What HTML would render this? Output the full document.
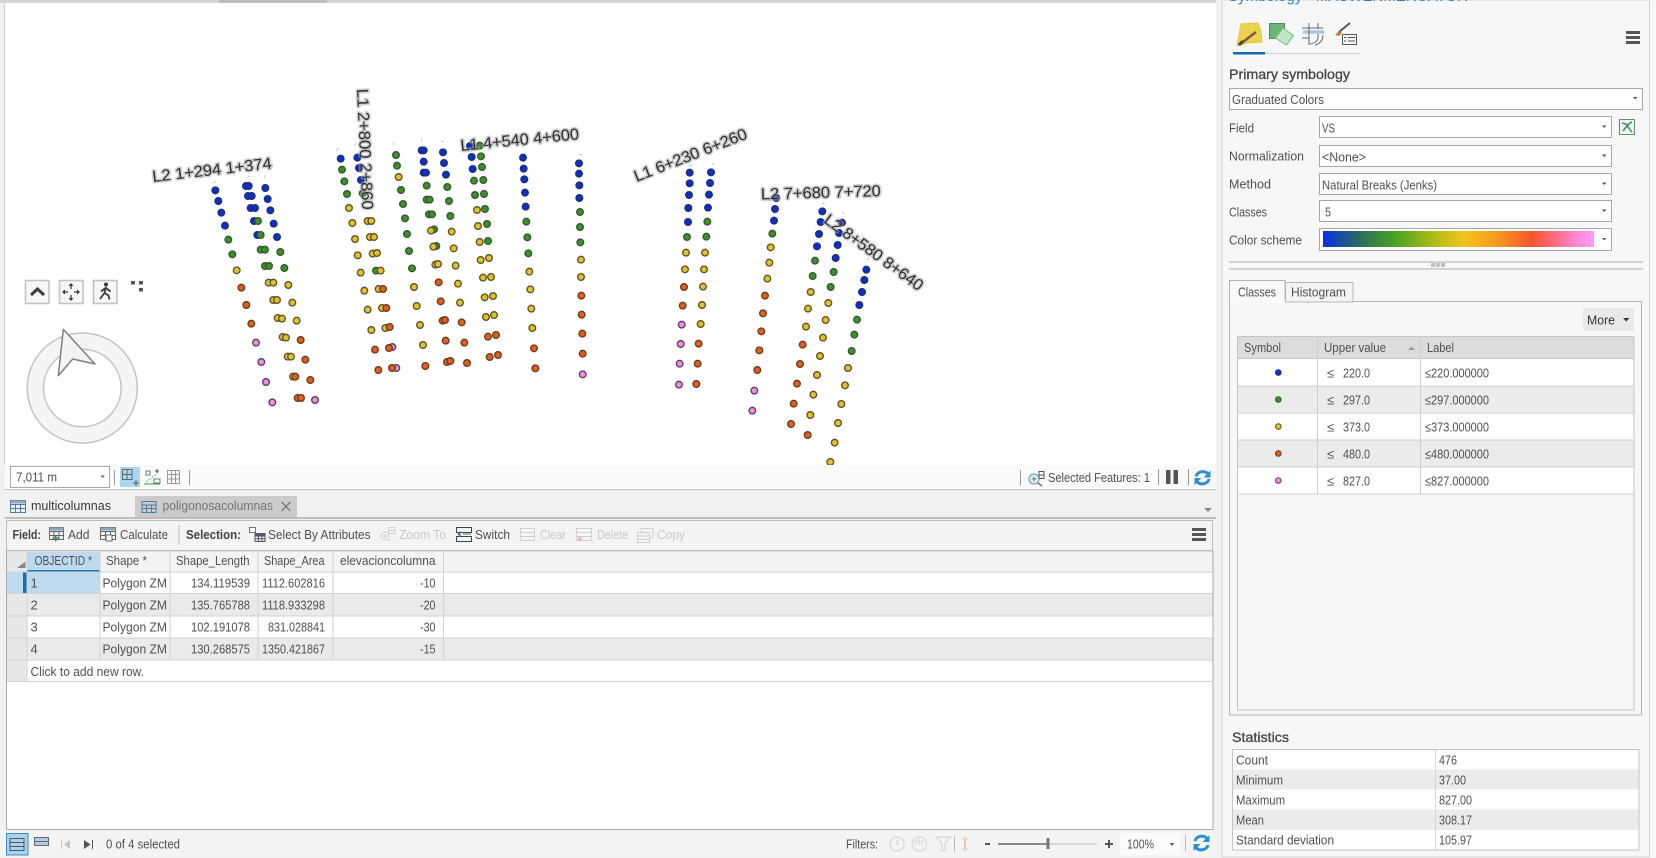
<!DOCTYPE html>
<html><head><meta charset="utf-8"><title>Symbology</title>
<style>
html,body{margin:0;padding:0;background:#f3f3f3;width:1656px;height:858px;overflow:hidden}
svg{display:block;position:absolute;left:0;top:0;filter:blur(.3px)}
text{font-family:"Liberation Sans",sans-serif;font-size:13px;fill:#505050;white-space:pre}
.dim{fill:#c9c9c9}
.h{font-size:14px;fill:#444;stroke:#444;stroke-width:.3px}
.b{font-weight:bold;fill:#444}
.lb{font-size:16px;fill:#2c2c2c;stroke:rgba(165,165,165,.55);stroke-width:3.2px;paint-order:stroke;stroke-linejoin:round}
.dots circle{r:10px;stroke-width:4px}
.cb{fill:#1030c4;stroke:#1c2c80}
.cg{fill:#3f8f2e;stroke:#2f5a2a}
.cy{fill:#e0c22e;stroke:#5e5020}
.co{fill:#e0601e;stroke:#6a3a1c}
.cp{fill:#ea90dc;stroke:#5e3a5c}
.ln{fill:none;stroke:#666;stroke-width:1}
.lnb{fill:none;stroke:#4a7ea8;stroke-width:1}
.lnd{fill:none;stroke:#d0d0d0;stroke-width:1}
</style></head><body>
<svg width="1656" height="858" viewBox="0 0 1656 858" xmlns="http://www.w3.org/2000/svg">
<defs>
<linearGradient id="cs" x1="0" x2="1" y1="0" y2="0">
<stop offset="0" stop-color="#0a2fe6"/><stop offset=".13" stop-color="#2b6a62"/><stop offset=".27" stop-color="#4aa41e"/><stop offset=".4" stop-color="#a9bb18"/><stop offset=".52" stop-color="#f2c41c"/><stop offset=".65" stop-color="#f7961e"/><stop offset=".77" stop-color="#f4552c"/><stop offset=".87" stop-color="#ff6f90"/><stop offset=".95" stop-color="#ff8fe4"/><stop offset="1" stop-color="#ff9cf6"/>
</linearGradient>
</defs>

<!-- page bg -->
<rect x="0" y="0" width="1656" height="858" fill="#f1f1f1"/>
<rect x="1650" y="0" width="6" height="858" fill="#f8f8f8"/>

<!-- Map -->
<rect x="0" y="0" width="1216" height="3" fill="#d4d4d4"/>
<rect x="219" y="0" width="108" height="3" fill="#bdbdbd"/>
<rect x="4" y="3" width="1212" height="462" fill="#ffffff"/>
<rect x="4" y="3" width="1" height="462" fill="#cfcfcf"/>

<g transform="translate(140,80) scale(.33333)" class="dots">
<g class="cb"><circle cx="226" cy="331"/><circle cx="235" cy="363"/><circle cx="244" cy="398"/><circle cx="255" cy="437"/><circle cx="318" cy="318"/><circle cx="326" cy="318"/><circle cx="324" cy="348"/><circle cx="335" cy="348"/><circle cx="332" cy="384"/><circle cx="345" cy="384"/><circle cx="342" cy="423"/><circle cx="352" cy="465"/><circle cx="376" cy="324"/><circle cx="383" cy="357"/><circle cx="391" cy="391"/><circle cx="401" cy="431"/><circle cx="411" cy="471"/><circle cx="602" cy="236"/><circle cx="652" cy="233"/><circle cx="657" cy="264"/><circle cx="663" cy="300"/><circle cx="845" cy="211"/><circle cx="851" cy="211"/><circle cx="851" cy="245"/><circle cx="851" cy="278"/><circle cx="858" cy="278"/><circle cx="909" cy="217"/><circle cx="912" cy="249"/><circle cx="918" cy="284"/><circle cx="990" cy="198"/><circle cx="995" cy="231"/><circle cx="998" cy="267"/><circle cx="1149" cy="233"/><circle cx="1151" cy="266"/><circle cx="1153" cy="298"/><circle cx="1155" cy="338"/><circle cx="1157" cy="380"/><circle cx="1317" cy="250"/><circle cx="1317" cy="281"/><circle cx="1318" cy="316"/><circle cx="1318" cy="354"/></g>
<g class="cg"><circle cx="265" cy="479"/><circle cx="277" cy="523"/><circle cx="354" cy="423"/><circle cx="362" cy="465"/><circle cx="362" cy="509"/><circle cx="375" cy="509"/><circle cx="375" cy="558"/><circle cx="387" cy="558"/><circle cx="421" cy="516"/><circle cx="433" cy="564"/><circle cx="606" cy="269"/><circle cx="613" cy="304"/><circle cx="621" cy="342"/><circle cx="668" cy="340"/><circle cx="708" cy="572"/><circle cx="768" cy="225"/><circle cx="771" cy="257"/><circle cx="783" cy="330"/><circle cx="789" cy="372"/><circle cx="795" cy="415"/><circle cx="801" cy="462"/><circle cx="807" cy="513"/><circle cx="816" cy="565"/><circle cx="860" cy="317"/><circle cx="860" cy="359"/><circle cx="869" cy="359"/><circle cx="867" cy="403"/><circle cx="876" cy="403"/><circle cx="882" cy="448"/><circle cx="889" cy="498"/><circle cx="922" cy="321"/><circle cx="927" cy="363"/><circle cx="931" cy="408"/><circle cx="1002" cy="302"/><circle cx="1005" cy="345"/><circle cx="1019" cy="197"/><circle cx="1023" cy="229"/><circle cx="1026" cy="261"/><circle cx="1030" cy="300"/><circle cx="1032" cy="342"/><circle cx="1035" cy="387"/><circle cx="1041" cy="432"/><circle cx="1044" cy="483"/><circle cx="1159" cy="425"/><circle cx="1162" cy="472"/><circle cx="1165" cy="520"/><circle cx="1320" cy="396"/><circle cx="1320" cy="441"/><circle cx="1321" cy="487"/></g>
<g class="cy"><circle cx="290" cy="571"/><circle cx="386" cy="608"/><circle cx="400" cy="608"/><circle cx="400" cy="660"/><circle cx="411" cy="660"/><circle cx="413" cy="714"/><circle cx="426" cy="716"/><circle cx="428" cy="771"/><circle cx="438" cy="773"/><circle cx="443" cy="830"/><circle cx="453" cy="830"/><circle cx="459" cy="890"/><circle cx="445" cy="615"/><circle cx="457" cy="668"/><circle cx="470" cy="722"/><circle cx="627" cy="384"/><circle cx="637" cy="429"/><circle cx="645" cy="477"/><circle cx="653" cy="526"/><circle cx="662" cy="578"/><circle cx="673" cy="632"/><circle cx="683" cy="689"/><circle cx="694" cy="750"/><circle cx="683" cy="423"/><circle cx="694" cy="423"/><circle cx="690" cy="471"/><circle cx="702" cy="471"/><circle cx="698" cy="521"/><circle cx="711" cy="519"/><circle cx="722" cy="572"/><circle cx="716" cy="627"/><circle cx="726" cy="684"/><circle cx="736" cy="744"/><circle cx="776" cy="291"/><circle cx="822" cy="621"/><circle cx="830" cy="678"/><circle cx="840" cy="735"/><circle cx="849" cy="795"/><circle cx="873" cy="452"/><circle cx="880" cy="500"/><circle cx="886" cy="554"/><circle cx="894" cy="552"/><circle cx="935" cy="455"/><circle cx="941" cy="505"/><circle cx="947" cy="557"/><circle cx="954" cy="611"/><circle cx="960" cy="668"/><circle cx="1011" cy="390"/><circle cx="1014" cy="438"/><circle cx="1019" cy="486"/><circle cx="1022" cy="540"/><circle cx="1029" cy="593"/><circle cx="1034" cy="652"/><circle cx="1038" cy="711"/><circle cx="1047" cy="534"/><circle cx="1053" cy="591"/><circle cx="1059" cy="648"/><circle cx="1062" cy="705"/><circle cx="1168" cy="575"/><circle cx="1171" cy="628"/><circle cx="1174" cy="686"/><circle cx="1177" cy="744"/><circle cx="1323" cy="539"/><circle cx="1323" cy="591"/></g>
<g class="co"><circle cx="304" cy="623"/><circle cx="319" cy="675"/><circle cx="334" cy="731"/><circle cx="466" cy="890"/><circle cx="473" cy="954"/><circle cx="483" cy="954"/><circle cx="482" cy="780"/><circle cx="496" cy="839"/><circle cx="511" cy="900"/><circle cx="705" cy="809"/><circle cx="715" cy="870"/><circle cx="729" cy="627"/><circle cx="739" cy="684"/><circle cx="749" cy="741"/><circle cx="896" cy="607"/><circle cx="902" cy="664"/><circle cx="908" cy="722"/><circle cx="915" cy="720"/><circle cx="917" cy="782"/><circle cx="921" cy="846"/><circle cx="931" cy="843"/><circle cx="856" cy="858"/><circle cx="965" cy="727"/><circle cx="973" cy="788"/><circle cx="981" cy="849"/><circle cx="1044" cy="770"/><circle cx="1049" cy="831"/><circle cx="1068" cy="765"/><circle cx="1074" cy="825"/><circle cx="1182" cy="805"/><circle cx="1186" cy="865"/><circle cx="1324" cy="647"/><circle cx="1325" cy="704"/><circle cx="1327" cy="761"/><circle cx="1328" cy="821"/></g>
<g class="cp"><circle cx="348" cy="788"/><circle cx="364" cy="846"/><circle cx="378" cy="906"/><circle cx="397" cy="967"/><circle cx="525" cy="960"/><circle cx="757" cy="801"/><circle cx="769" cy="864"/><circle cx="1328" cy="883"/></g>
<g class="co"><circle cx="747" cy="804"/><circle cx="756" cy="864"/></g>
</g>

<g transform="translate(620,110) scale(.33333)" class="dots">
<g class="cb"><circle cx="209" cy="188"/><circle cx="209" cy="220"/><circle cx="207" cy="255"/><circle cx="205" cy="294"/><circle cx="204" cy="336"/><circle cx="273" cy="187"/><circle cx="270" cy="219"/><circle cx="267" cy="254"/><circle cx="264" cy="293"/><circle cx="469" cy="264"/><circle cx="465" cy="297"/><circle cx="462" cy="332"/><circle cx="607" cy="304"/><circle cx="602" cy="336"/><circle cx="597" cy="372"/><circle cx="591" cy="409"/><circle cx="666" cy="338"/><circle cx="657" cy="369"/><circle cx="653" cy="405"/><circle cx="647" cy="444"/><circle cx="739" cy="479"/><circle cx="733" cy="510"/><circle cx="726" cy="546"/><circle cx="718" cy="585"/></g>
<g class="cg"><circle cx="201" cy="381"/><circle cx="262" cy="335"/><circle cx="259" cy="380"/><circle cx="457" cy="371"/><circle cx="585" cy="452"/><circle cx="578" cy="498"/><circle cx="641" cy="486"/><circle cx="632" cy="531"/><circle cx="711" cy="629"/><circle cx="703" cy="674"/><circle cx="695" cy="723"/></g>
<g class="cy"><circle cx="198" cy="428"/><circle cx="195" cy="478"/><circle cx="255" cy="428"/><circle cx="252" cy="478"/><circle cx="249" cy="530"/><circle cx="246" cy="585"/><circle cx="242" cy="642"/><circle cx="452" cy="412"/><circle cx="448" cy="458"/><circle cx="442" cy="506"/><circle cx="572" cy="546"/><circle cx="564" cy="596"/><circle cx="558" cy="650"/><circle cx="625" cy="579"/><circle cx="617" cy="630"/><circle cx="609" cy="683"/><circle cx="600" cy="738"/><circle cx="591" cy="795"/><circle cx="580" cy="854"/><circle cx="571" cy="915"/><circle cx="684" cy="774"/><circle cx="675" cy="826"/><circle cx="664" cy="882"/><circle cx="654" cy="939"/><circle cx="644" cy="998"/><circle cx="631" cy="1056"/></g>
<g class="co"><circle cx="192" cy="531"/><circle cx="188" cy="587"/><circle cx="236" cy="701"/><circle cx="233" cy="761"/><circle cx="229" cy="822"/><circle cx="435" cy="557"/><circle cx="429" cy="610"/><circle cx="424" cy="664"/><circle cx="418" cy="721"/><circle cx="412" cy="780"/><circle cx="548" cy="704"/><circle cx="540" cy="762"/><circle cx="531" cy="821"/><circle cx="521" cy="881"/><circle cx="513" cy="942"/><circle cx="563" cy="975"/></g>
<g class="cp"><circle cx="185" cy="644"/><circle cx="182" cy="702"/><circle cx="179" cy="761"/><circle cx="177" cy="824"/><circle cx="403" cy="842"/><circle cx="397" cy="902"/></g>
</g>

<!-- tiny leader ticks -->
<path d="M336 151l3-3M355 146l1-3M393 145l1-3M421 142l1-3M441 142l3-1M213 183l3-2M247 178l3-2M264 178l1-3M522 147l3-2M579 155l3-1M689 166l3-1M712 165l2-2M786 200l3-1M822 203l3 1M842 212l2 2M867 258l2 2" fill="none" stroke="#b8c9ea" stroke-width="1"/>

<!-- map labels -->
<text class="lb" transform="translate(153,182) rotate(-6.5)" textLength="120" lengthAdjust="spacingAndGlyphs">L2 1+294 1+374</text>
<text class="lb" transform="translate(357,89) rotate(87.5)" textLength="121" lengthAdjust="spacingAndGlyphs">L1 2+800 2+860</text>
<text class="lb" transform="translate(461,151) rotate(-5.7)" textLength="119" lengthAdjust="spacingAndGlyphs">L1 4+540 4+600</text>
<text class="lb" transform="translate(636.5,182) rotate(-21.4)" textLength="120" lengthAdjust="spacingAndGlyphs">L1 6+230 6+260</text>
<text class="lb" transform="translate(761,199.5) rotate(-1.6)" textLength="120" lengthAdjust="spacingAndGlyphs">L2 7+680 7+720</text>
<text class="lb" transform="translate(823,222) rotate(36)" textLength="118" lengthAdjust="spacingAndGlyphs">L2 8+580 8+640</text>

<!-- nav control -->
<g fill="#f6f6f6" stroke="#c4c4c4" stroke-width="1.6">
<rect x="25.5" y="280.5" width="23.5" height="23"/><rect x="59.5" y="280.5" width="23.5" height="23"/><rect x="93.5" y="280.5" width="23.5" height="23"/>
</g>
<path d="M31 295l6.5-6 6.5 6" fill="none" stroke="#3c3c3c" stroke-width="3"/>
<path d="M71 283l-2.5 3h5zM71 301l-2.5-3h5zM62 292l3-2.5v5zM80 292l-3-2.5v5z" fill="#3c3c3c"/>
<path d="M65 292h3M74 292h3M71 286v3M71 295v3" stroke="#3c3c3c" stroke-width="1.3"/>
<circle cx="106" cy="284.5" r="2" fill="#3c3c3c"/>
<path d="M106 287l-1.5 6M104.5 293l-4.5 6M104.5 293l4 2.5 1 4M105.5 288l-4.5 3.5M106 288l4.5 3.5" fill="none" stroke="#3c3c3c" stroke-width="1.8"/>
<g fill="#555"><rect x="131" y="281" width="4" height="3.5"/><rect x="139" y="281" width="4" height="3.5"/><rect x="139" y="288" width="4" height="3.5"/></g>
<circle cx="82.3" cy="388" r="47" fill="none" stroke="#f5f5f5" stroke-width="16"/>
<circle cx="82.3" cy="388" r="55" fill="none" stroke="#c2c2c2" stroke-width="1.5"/>
<circle cx="82.3" cy="388" r="38.8" fill="none" stroke="#c2c2c2" stroke-width="1.5"/>
<path d="M63.3 329.3L95 364l-22.3-5L58.3 375.7z" fill="#f3f3f3" stroke="#808080" stroke-width="1.5" stroke-linejoin="round"/>

<!-- map status bar -->
<rect x="5" y="465" width="1211" height="24" fill="#fafafa"/>
<rect x="4" y="489" width="1212" height="1" fill="#c8c8c8"/>
<rect x="10.5" y="466.5" width="99" height="21" fill="#fff" stroke="#a8a8a8"/>
<text x="16" y="481.5" textLength="41" lengthAdjust="spacingAndGlyphs" style="font-size:13px">7,011 m</text>
<path d="M100.5 475.5h4.500l-2.250 2.500z" fill="#666"/>
<rect x="114" y="470" width="1" height="15" fill="#9a9a9a"/>
<rect x="120" y="467" width="20" height="20" fill="#a8d6f2"/>
<path d="M122.5 469.5h9.5v10h-9.500zM122.5 474.5h9.500M127 469.500v10" class="ln"/>
<path d="M133 483h6M136 480v6" stroke="#555" stroke-width="1" fill="none"/>
<path d="M146 471h4v4h-4zM154 479h6v4h-6z" fill="none" stroke="#5a8a6a"/>
<path d="M146 482l12-9" stroke="#8ac0d8" stroke-dasharray="2 1.5" stroke-width="1.5"/>
<path d="M144 484h16" stroke="#3f8f50"/>
<path d="M155 471h4M157 469v4" stroke="#555"/>
<path d="M167.5 470.5h12v13h-12zM167.5 474.5h12M167.5 479h12M171.5 470.5v13M175.5 470.5v13" fill="none" stroke="#9a9a9a"/>
<rect x="189" y="470" width="1" height="15" fill="#9a9a9a"/>

<rect x="1020" y="470" width="1" height="15" fill="#999"/>
<circle cx="1034" cy="479" r="5" fill="#e8f2fa" stroke="#6a8fa8"/>
<path d="M1034 476.5v5M1031.5 479h5" stroke="#4a7a9a"/>
<path d="M1038 483l4 3" stroke="#8a6a3a" stroke-width="1.5"/>
<path d="M1039 471.5h5v7h-5zM1039 475h5" fill="none" stroke="#555"/>
<text x="1048" y="482" textLength="102" lengthAdjust="spacingAndGlyphs">Selected Features: 1</text>
<rect x="1158" y="469" width="1" height="16" fill="#999"/>
<rect x="1166" y="470" width="4.5" height="14" fill="#555"/><rect x="1173.5" y="470" width="4.5" height="14" fill="#555"/>
<rect x="1188" y="469" width="1" height="16" fill="#999"/>
<g fill="none" stroke="#2e8fd0" stroke-width="3">
<path d="M1196 476.5c1-5 9-7 12.5-2"/><path d="M1209 479c-1 5-9 7-12.5 2"/>
</g>
<path d="M1210.5 470.5v7h-7zM1194.5 485v-7h7z" fill="#2e8fd0"/>

<!-- tabs -->
<path class="lnb" d="M10.5 500.5h15v12h-15zM10.5 504.5h15M10.5 508.5h15M15.5 504.5v8M20.5 504.5v8"/>
<rect x="10" y="500" width="16" height="3.5" fill="#6d8ea8" opacity=".7"/>
<text x="31" y="510" textLength="80" lengthAdjust="spacingAndGlyphs" style="fill:#3a3a3a">multicolumnas</text>
<rect x="135" y="496" width="162" height="21" fill="#cbcbcb"/>
<path d="M142 501.5h14v11h-14zM142 505h14M142 508.5h14M146.5 505v7.5M151.5 505v7.5" class="lnb"/>
<text x="162.5" y="510" textLength="110.5" lengthAdjust="spacingAndGlyphs" style="fill:#757575">poligonosacolumnas</text>
<path d="M281.5 502l9 9M290.5 502l-9 9" stroke="#7a7a7a" stroke-width="1.3" fill="none"/>
<path d="M1204 508h8l-4 4z" fill="#8a8a8a"/>

<!-- table pane -->
<rect x="5" y="517" width="1211" height="2" fill="#bdbdbd"/>
<rect x="5" y="519" width="1211" height="311" fill="#f2f2f2"/>
<rect x="6.5" y="520.5" width="1206" height="30" fill="#f4f4f4" stroke="#bdbdbd"/>
<rect x="6" y="550" width="1207" height="1.5" fill="#bdbdbd"/>

<text x="12.5" y="539" textLength="28.5" lengthAdjust="spacingAndGlyphs" class="b">Field:</text>
<path d="M49.5 527.5h14v12h-14zM49.5 531.5h14M49.5 535.5h14M54 531.5v8M59 531.5v8" fill="none" stroke="#666"/>
<path d="M52.5 538h6.5M55.75 535v6.5" stroke="#3f8f50" stroke-width="1.5"/>
<rect x="49.5" y="527.5" width="14" height="3" fill="#8aa5ba"/>
<text x="68" y="539" textLength="21.5" lengthAdjust="spacingAndGlyphs">Add</text>
<path d="M100.5 527.5h15v12h-15zM100.5 531.5h15M100.5 535.5h15M105.5 531.5v8M110.5 531.5v8" fill="none" stroke="#666"/>
<rect x="100.5" y="527.5" width="15" height="3" fill="#8aa5ba"/>
<path d="M106 535h6v6h-6z" fill="#fff" stroke="#666"/>
<text x="120" y="539" textLength="48" lengthAdjust="spacingAndGlyphs">Calculate</text>
<rect x="178.5" y="525" width="1" height="20" fill="#bcbcbc"/>
<text x="186" y="539" textLength="55" lengthAdjust="spacingAndGlyphs" class="b">Selection:</text>
<path d="M249.5 527.5h6v5h-6z" fill="#fff" stroke="#5a7a90"/>
<path d="M255 533.5h10v8h-10zM255 536h10M255 538.7h10M258.5 533.5v8M262 533.5v8" fill="none" stroke="#555"/>
<rect x="255" y="533" width="10.5" height="2.5" fill="#557"/>
<text x="268" y="539" textLength="102.5" lengthAdjust="spacingAndGlyphs">Select By Attributes</text>
<circle cx="385" cy="536" r="4" fill="none" stroke="#bfd4e0"/>
<path d="M388 539l2 2M383 536h4M385 534v4" stroke="#bfd4e0" fill="none"/>
<path d="M388.5 527.5h6.5v6h-6.5zM388.5 530.5h6.5" fill="none" stroke="#d0d0d0"/>
<text x="399" y="539" textLength="47" lengthAdjust="spacingAndGlyphs" class="dim">Zoom To</text>
<path d="M456.5 536.5h15v5h-15zM456.5 527.5h15v5h-15z" fill="none" stroke="#444"/>
<path d="M463 534h8M458 534l2-2v4z" stroke="#3b7aa8" fill="#3b7aa8"/>
<text x="475" y="539" textLength="35" lengthAdjust="spacingAndGlyphs">Switch</text>
<path d="M520.5 528.5h14v12h-14zM520.5 532.5h14M520.5 536.5h14" class="lnd"/>
<text x="540" y="539" textLength="26" lengthAdjust="spacingAndGlyphs" class="dim">Clear</text>
<path d="M576.5 528.5h15v12h-15zM576.5 532.5h15M576.5 536.5h15" class="lnd"/>
<path d="M578 537l3.5 3.5M581.5 537l-3.5 3.5" stroke="#e2b0a0"/>
<text x="597" y="539" textLength="31" lengthAdjust="spacingAndGlyphs" class="dim">Delete</text>
<path d="M637.5 532.5h12v10h-12zM637.5 536h12M637.5 539.5h12M641 532.5v-4h12v9h-3.5" class="lnd"/>
<text x="657" y="539" textLength="28" lengthAdjust="spacingAndGlyphs" class="dim">Copy</text>
<g fill="#555"><rect x="1192" y="528" width="14" height="3"/><rect x="1192" y="533" width="14" height="3"/><rect x="1192" y="538" width="14" height="3"/></g>

<!-- grid -->
<rect x="7" y="551.5" width="1205.5" height="278" fill="#fff"/>
<rect x="7" y="552" width="1205.5" height="20" fill="#f4f4f4"/>
<rect x="7" y="552" width="20" height="129" fill="#e8e8e8"/>
<rect x="27" y="552" width="73" height="20" fill="#bfdaf0"/>
<rect x="27" y="570" width="73" height="2" fill="#1e78b8"/>
<rect x="7" y="572" width="93" height="21.5" fill="#bfd9ef"/>
<rect x="23" y="572" width="3.5" height="21.5" fill="#1a6fae"/>
<rect x="27" y="594" width="1185.5" height="22" fill="#eaeaea"/>
<rect x="27" y="638" width="1185.5" height="22" fill="#eaeaea"/>
<path d="M17 568h8.5v-6.500z" fill="#888"/>
<g fill="#d2d2d2">
<rect x="7" y="571.5" width="1205.5" height="1"/><rect x="7" y="593" width="1205.5" height="1"/><rect x="7" y="615.5" width="1205.5" height="1"/><rect x="7" y="637.5" width="1205.5" height="1"/><rect x="7" y="659.5" width="1205.5" height="1"/><rect x="7" y="681" width="1205.5" height="1"/>
<rect x="99.5" y="552" width="1" height="108"/><rect x="169.5" y="552" width="1" height="108"/><rect x="257.5" y="552" width="1" height="108"/><rect x="332.5" y="552" width="1" height="108"/><rect x="443" y="552" width="1" height="108"/>
<rect x="26.5" y="552" width="1" height="129"/>
</g>
<rect x="6" y="551" width="1" height="279" fill="#aaa"/>
<rect x="1212.5" y="551" width="1" height="279" fill="#aaa"/>
<rect x="6" y="829" width="1207.5" height="1" fill="#aaa"/>

<g style="fill:#444">
<text x="34.5" y="565" textLength="57.5" lengthAdjust="spacingAndGlyphs">OBJECTID *</text>
<text x="106" y="565" textLength="41" lengthAdjust="spacingAndGlyphs">Shape *</text>
<text x="176" y="565" textLength="73.5" lengthAdjust="spacingAndGlyphs">Shape_Length</text>
<text x="264" y="565" textLength="60.5" lengthAdjust="spacingAndGlyphs">Shape_Area</text>
<text x="340" y="565" textLength="95.5" lengthAdjust="spacingAndGlyphs">elevacioncolumna</text>
</g>
<text x="30.5" y="587.5">1</text><text x="102.5" y="587.5" textLength="64.5" lengthAdjust="spacingAndGlyphs">Polygon ZM</text><text x="191" y="587.5" textLength="59" lengthAdjust="spacingAndGlyphs">134.119539</text><text x="262" y="587.5" textLength="63" lengthAdjust="spacingAndGlyphs">1112.602816</text><text x="420" y="587.5" textLength="15.5" lengthAdjust="spacingAndGlyphs">-10</text>
<text x="30.5" y="609.5">2</text><text x="102.5" y="609.5" textLength="64.5" lengthAdjust="spacingAndGlyphs">Polygon ZM</text><text x="191" y="609.5" textLength="59" lengthAdjust="spacingAndGlyphs">135.765788</text><text x="262" y="609.5" textLength="63" lengthAdjust="spacingAndGlyphs">1118.933298</text><text x="420" y="609.5" textLength="15.5" lengthAdjust="spacingAndGlyphs">-20</text>
<text x="30.5" y="631.5">3</text><text x="102.5" y="631.5" textLength="64.5" lengthAdjust="spacingAndGlyphs">Polygon ZM</text><text x="191" y="631.5" textLength="59" lengthAdjust="spacingAndGlyphs">102.191078</text><text x="268" y="631.5" textLength="57" lengthAdjust="spacingAndGlyphs">831.028841</text><text x="420" y="631.5" textLength="15.5" lengthAdjust="spacingAndGlyphs">-30</text>
<text x="30.5" y="653.5">4</text><text x="102.5" y="653.5" textLength="64.5" lengthAdjust="spacingAndGlyphs">Polygon ZM</text><text x="191" y="653.5" textLength="59" lengthAdjust="spacingAndGlyphs">130.268575</text><text x="262" y="653.5" textLength="63" lengthAdjust="spacingAndGlyphs">1350.421867</text><text x="420" y="653.5" textLength="15.5" lengthAdjust="spacingAndGlyphs">-15</text>
<text x="30.5" y="676" textLength="113.5" lengthAdjust="spacingAndGlyphs">Click to add new row.</text>

<!-- bottom status -->
<rect x="0" y="830" width="1216" height="27" fill="#f4f4f4"/>
<rect x="6.5" y="833.5" width="21.5" height="21.5" fill="#a8d4f0" stroke="#3a8cc8"/>
<path d="M10 838.5h14v12h-14zM10 842.5h14M10 846.5h14" fill="none" stroke="#555"/>
<path d="M34.5 837.5h14v8h-14zM34.5 841.5h14" fill="#b8cbdc" stroke="#5a6a7a"/>
<path d="M61.5 840v9" stroke="#c8c8c8"/><path d="M70 840v9l-6-4.5z" fill="#c4c4c4"/>
<path d="M84 840v9l6.5-4.5z" fill="#555"/><path d="M92.5 840v9" stroke="#555"/>
<text x="106" y="848.5" textLength="74" lengthAdjust="spacingAndGlyphs">0 of 4 selected</text>
<text x="846" y="848.5" textLength="32" lengthAdjust="spacingAndGlyphs">Filters:</text>
<g fill="none" stroke="#dcdcdc" stroke-width="1.5">
<circle cx="897" cy="844" r="7"/><path d="M897 840v4h3"/>
<circle cx="919.5" cy="844" r="7"/><path d="M916 840v5M919 839v6M922 840v5"/>
<path d="M936 837h15l-6 6v8h-3v-8z"/>
</g>
<rect x="954" y="836" width="1" height="16" fill="#bcbcbc"/>
<path d="M965 836l-3 4h6zM965 852l-3-4h6z" fill="#cfe0cc"/><path d="M965 840v8" stroke="#e8c8a8" stroke-width="2"/>
<rect x="985" y="843" width="5" height="2" fill="#555"/>
<rect x="998" y="843" width="50" height="2" fill="#8a8a8a"/>
<rect x="1048" y="843" width="49" height="2" fill="#d8d8d8"/>
<rect x="1046.5" y="838" width="3" height="11" fill="#777"/>
<path d="M1105 844h8M1109 840v8" stroke="#555" stroke-width="2"/>
<rect x="1120" y="833" width="60" height="22" fill="#fbfbfb"/>
<text x="1127" y="848.5" textLength="27" lengthAdjust="spacingAndGlyphs">100%</text>
<path d="M1169.5 843h5l-2.5 3z" fill="#666"/>
<rect x="1185" y="835" width="1" height="16" fill="#bcbcbc"/>
<g fill="none" stroke="#2e8fd0" stroke-width="3">
<path d="M1195 841c1-5 9-7 12.5-2"/><path d="M1208 845c-1 5-9 7-12.5 2"/>
</g>
<path d="M1209.5 835v7h-7zM1193.5 851v-7h7z" fill="#2e8fd0"/>

<!-- right panel -->
<rect x="1222" y="0" width="427.5" height="857" fill="#f7f7f7" stroke="#d4d4d4"/>
<text x="1228" y="1" textLength="240" lengthAdjust="spacingAndGlyphs" style="font-size:16px;fill:#2b80c4">Symbology - MASWENMERCATOR</text>

<!-- tab icons -->
<path d="M1241 24l17-1 3 8 1 11-15 1-10 3z" fill="#ecd24e" stroke="#e2c63e"/>
<path d="M1239 45l17-13" stroke="#7a5a3a" stroke-width="2.5"/><path d="M1239 45l4-4" stroke="#444" stroke-width="3"/>
<rect x="1269.5" y="23.5" width="15" height="15" fill="#6bb674" stroke="#4d8a5a"/>
<path d="M1283 28l10.5 7.5-7 9.5-11-7z" fill="#c2e6c2" stroke="#7ab58a"/>
<path d="M1303 32h21" stroke="#aac8e0" stroke-width="3.5"/>
<path d="M1309 23v22M1318 23v6M1302 38h7M1302 28h21M1318 34v3c0 5-4 6-8 7M1323 35c0 6-4 9-8 10" fill="none" stroke="#666"/>
<path d="M1350 23l-11 9" stroke="#555" stroke-width="2"/><path d="M1335 35l4-4 3 2-3 3z" fill="#c07a40"/>
<path d="M1342.5 34.5h14v10h-14zM1344 37.5h2M1348 37.5h7M1344 41h2M1348 41h7" fill="#f7f7f7" stroke="#555"/>
<rect x="1233" y="52" width="32" height="2.5" fill="#0f6eb0"/>
<rect x="1265" y="53" width="95" height="1" fill="#cfcfcf"/>
<g fill="#555"><rect x="1626" y="31" width="14" height="3"/><rect x="1626" y="36" width="14" height="3"/><rect x="1626" y="41" width="14" height="3"/></g>

<text class="h" x="1229" y="79" textLength="121" lengthAdjust="spacingAndGlyphs">Primary symbology</text>

<g fill="#fff" stroke="#a8a8a8">
<rect x="1229.5" y="88.5" width="413" height="21"/>
<rect x="1319.5" y="116.5" width="292" height="21"/>
<rect x="1319.5" y="145.5" width="292" height="21"/>
<rect x="1319.5" y="173.5" width="292" height="21"/>
<rect x="1319.5" y="200.5" width="292" height="21"/>
<rect x="1319.5" y="228.5" width="292" height="22"/>
</g>
<text x="1232" y="104" textLength="92" lengthAdjust="spacingAndGlyphs">Graduated Colors</text>
<g fill="#555"><path d="M1633 97h4.5l-2.25 2.5z"/><path d="M1602 125.5h4.5l-2.25 2.5z"/><path d="M1602 154.5h4.5l-2.25 2.5z"/><path d="M1602 182.5h4.5l-2.25 2.5z"/><path d="M1602 209.5h4.5l-2.25 2.5z"/><path d="M1602 238h4.5l-2.25 2.5z"/></g>
<rect x="1619.5" y="119.5" width="15" height="15" fill="#eef5ee" stroke="#6a8a70"/>
<path d="M1622 123l4 1c2 3 4 6 6 8M1632 122c-3 1-6 5-9 9" fill="none" stroke="#3f8f60" stroke-width="1.5"/>

<text x="1229" y="132.5" textLength="25" lengthAdjust="spacingAndGlyphs">Field</text>
<text x="1229" y="160.5" textLength="75" lengthAdjust="spacingAndGlyphs">Normalization</text>
<text x="1229" y="188.5" textLength="42" lengthAdjust="spacingAndGlyphs">Method</text>
<text x="1229" y="216.5" textLength="38" lengthAdjust="spacingAndGlyphs">Classes</text>
<text x="1229" y="244.5" textLength="73" lengthAdjust="spacingAndGlyphs">Color scheme</text>
<text x="1322" y="132.5" textLength="13" lengthAdjust="spacingAndGlyphs">VS</text>
<text x="1322" y="161.5" textLength="44" lengthAdjust="spacingAndGlyphs">&lt;None&gt;</text>
<text x="1322" y="189.5" textLength="115" lengthAdjust="spacingAndGlyphs">Natural Breaks (Jenks)</text>
<text x="1325" y="216.5" textLength="6" lengthAdjust="spacingAndGlyphs">5</text>
<rect x="1323" y="231" width="271" height="16" fill="url(#cs)"/>

<rect x="1229" y="261" width="414" height="2" fill="#d2d2d2"/>
<rect x="1229" y="268" width="414" height="2" fill="#d2d2d2"/>
<g fill="#c0c0c0"><rect x="1431" y="263" width="4" height="4"/><rect x="1436" y="263" width="4" height="4"/><rect x="1441" y="263" width="4" height="4"/></g>

<!-- classes tab -->
<rect x="1229.5" y="301.5" width="412" height="413.5" fill="#f7f7f7" stroke="#b4b4b4"/>
<rect x="1285.5" y="282.5" width="67.5" height="19.5" fill="#f3f3f3" stroke="#b4b4b4"/>
<path d="M1229.5 302v-21.5h55.5V302" fill="#f9f9f9" stroke="#b4b4b4"/>
<rect x="1230" y="300" width="55" height="3" fill="#f9f9f9"/>
<text x="1238" y="296.5" textLength="38" lengthAdjust="spacingAndGlyphs">Classes</text>
<text x="1291" y="296.5" textLength="55" lengthAdjust="spacingAndGlyphs">Histogram</text>
<rect x="1583" y="308" width="51" height="23" fill="#e9e9e9"/>
<text x="1587" y="324.5" textLength="28" lengthAdjust="spacingAndGlyphs" style="fill:#333">More</text>
<path d="M1623 318h6.5l-3.25 3.5z" fill="#333"/>

<rect x="1237.5" y="336.5" width="396.5" height="373.500" fill="#f7f7f7" stroke="#c4c4c4"/>
<rect x="1238" y="337" width="395.5" height="21" fill="#dcdcdc"/>
<rect x="1238" y="358" width="395.5" height="2" fill="#c8c8c8"/>
<rect x="1238" y="359" width="395.5" height="26.5" fill="#fff"/>
<rect x="1238" y="386" width="395.5" height="26.5" fill="#ebebeb"/>
<rect x="1238" y="413" width="395.5" height="26.5" fill="#fff"/>
<rect x="1238" y="440" width="395.5" height="26.5" fill="#ebebeb"/>
<rect x="1238" y="467" width="395.5" height="26.5" fill="#fff"/>
<g fill="#cfcfcf"><rect x="1238" y="385.5" width="395.5" height="1"/><rect x="1238" y="412.5" width="395.5" height="1"/><rect x="1238" y="439.5" width="395.5" height="1"/><rect x="1238" y="466.5" width="395.5" height="1"/><rect x="1238" y="493.5" width="395.5" height="1"/><rect x="1317" y="337" width="1" height="157"/><rect x="1420" y="337" width="1" height="157"/></g>
<text x="1244" y="352" textLength="37" lengthAdjust="spacingAndGlyphs">Symbol</text>
<text x="1324" y="352" textLength="62" lengthAdjust="spacingAndGlyphs">Upper value</text>
<path d="M1408 350h7l-3.5-3.5z" fill="#999"/>
<text x="1427" y="352" textLength="27" lengthAdjust="spacingAndGlyphs">Label</text>
<circle cx="1278.3" cy="372.5" r="2.8" fill="#1030c4" stroke="#1c2c80"/>
<circle cx="1278.3" cy="399.5" r="2.8" fill="#3f8f2e" stroke="#2f5a2a"/>
<circle cx="1278.3" cy="426.5" r="2.8" fill="#e0c22e" stroke="#5e5020"/>
<circle cx="1278.3" cy="453.5" r="2.8" fill="#e0601e" stroke="#6a3a1c"/>
<circle cx="1278.3" cy="480.5" r="2.8" fill="#ea90dc" stroke="#5e3a5c"/>
<text x="1327" y="377.5">≤</text><text x="1343" y="377.5" textLength="27" lengthAdjust="spacingAndGlyphs">220.0</text><text x="1425" y="377.5" textLength="64" lengthAdjust="spacingAndGlyphs">≤220.000000</text>
<text x="1327" y="404.5">≤</text><text x="1343" y="404.5" textLength="27" lengthAdjust="spacingAndGlyphs">297.0</text><text x="1425" y="404.5" textLength="64" lengthAdjust="spacingAndGlyphs">≤297.000000</text>
<text x="1327" y="431.5">≤</text><text x="1343" y="431.5" textLength="27" lengthAdjust="spacingAndGlyphs">373.0</text><text x="1425" y="431.5" textLength="64" lengthAdjust="spacingAndGlyphs">≤373.000000</text>
<text x="1327" y="458.5">≤</text><text x="1343" y="458.5" textLength="27" lengthAdjust="spacingAndGlyphs">480.0</text><text x="1425" y="458.5" textLength="64" lengthAdjust="spacingAndGlyphs">≤480.000000</text>
<text x="1327" y="485.5">≤</text><text x="1343" y="485.5" textLength="27" lengthAdjust="spacingAndGlyphs">827.0</text><text x="1425" y="485.5" textLength="64" lengthAdjust="spacingAndGlyphs">≤827.000000</text>

<!-- statistics -->
<text class="h" x="1232" y="742" textLength="57" lengthAdjust="spacingAndGlyphs">Statistics</text>
<rect x="1232.5" y="749.5" width="406.5" height="100.5" fill="#fff" stroke="#c4c4c4"/>
<rect x="1233" y="769.5" width="405.5" height="20" fill="#ebebeb"/>
<rect x="1233" y="809.5" width="405.5" height="20.5" fill="#ebebeb"/>
<rect x="1435" y="750" width="1" height="100" fill="#d6d6d6"/>
<text x="1236" y="764.5" textLength="32" lengthAdjust="spacingAndGlyphs">Count</text><text x="1439" y="764.5" textLength="18" lengthAdjust="spacingAndGlyphs">476</text>
<text x="1236" y="784.5" textLength="47" lengthAdjust="spacingAndGlyphs">Minimum</text><text x="1439" y="784.5" textLength="27" lengthAdjust="spacingAndGlyphs">37.00</text>
<text x="1236" y="804.5" textLength="49" lengthAdjust="spacingAndGlyphs">Maximum</text><text x="1439" y="804.5" textLength="33" lengthAdjust="spacingAndGlyphs">827.00</text>
<text x="1236" y="824.5" textLength="28" lengthAdjust="spacingAndGlyphs">Mean</text><text x="1439" y="824.5" textLength="33" lengthAdjust="spacingAndGlyphs">308.17</text>
<text x="1236" y="844.5" textLength="98" lengthAdjust="spacingAndGlyphs">Standard deviation</text><text x="1439" y="844.5" textLength="33" lengthAdjust="spacingAndGlyphs">105.97</text>
</svg>
</body></html>
